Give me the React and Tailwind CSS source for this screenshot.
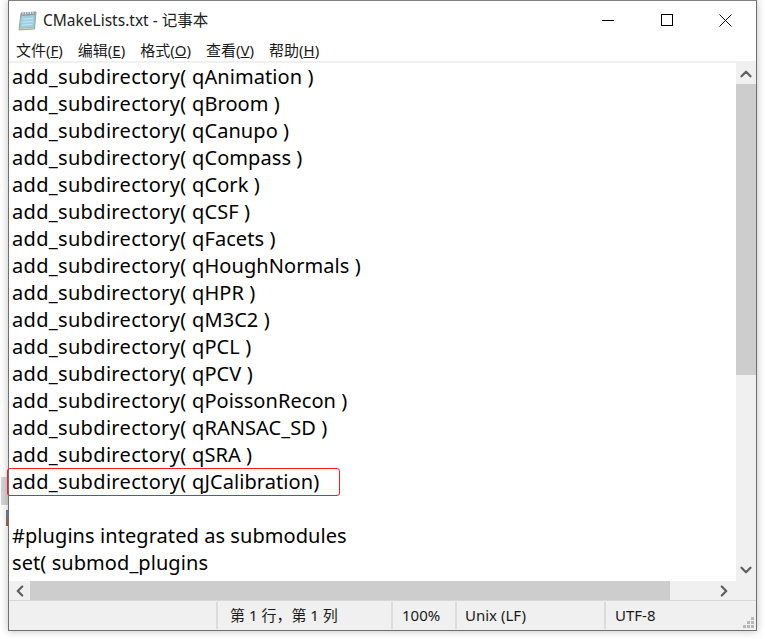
import { ChevronUp, ChevronDown, ChevronLeft, ChevronRight } from 'lucide-react';

const MODULES = [
  'qAnimation )',
  'qBroom )',
  'qCanupo )',
  'qCompass )',
  'qCork )',
  'qCSF )',
  'qFacets )',
  'qHoughNormals )',
  'qHPR )',
  'qM3C2 )',
  'qPCL )',
  'qPCV )',
  'qPoissonRecon )',
  'qRANSAC_SD )',
  'qSRA )',
];

const MENUS = [
  ['文件(', 'F', ')'],
  ['编辑(', 'E', ')'],
  ['格式(', 'O', ')'],
  ['查看(', 'V', ')'],
  ['帮助(', 'H', ')'],
];

const FONT = "font-['Noto_Sans','Noto_Sans_CJK_SC',sans-serif]";

function NotepadIcon() {
  return (
    <svg width="19" height="21" viewBox="0 0 19 21">
      <path d="M3 3 L18 2 L16.5 19 L1 20 Z" fill="#e4dcc0" stroke="#a8a48c" strokeWidth="1" />
      <path d="M3.5 3 L17.5 2 L16 17.5 L1.8 18.3 Z" fill="#9ed0e4" stroke="#7fa9bb" strokeWidth="0.6" />
      <path d="M3.5 3 L17.5 2 L17.2 5 L3.2 6 Z" fill="#8d9ca5" />
      <path d="M5 1 V4.5 M7.5 1 V4.5 M10 1 V4 M12.5 1 V4 M15 1 V4" stroke="#e8edf0" strokeWidth="1" />
      <path d="M5 9 L15 8.3 M4.7 12 L14.7 11.3 M4.4 15 L14.4 14.3" stroke="#c8e6f1" strokeWidth="1" />
    </svg>
  );
}

function Prefix() {
  return <span className="tracking-[0.33px]">add_subdirectory( </span>;
}

export default function App() {
  return (
    <div className={`w-[765px] h-[639px] bg-white overflow-hidden relative ${FONT}`}>
      {/* bits of the desktop behind the window */}
      <div className="absolute left-[1px] top-[477px] w-[7px] h-[28px] bg-[#d4d4d4]" />
      <div className="absolute left-[6px] top-[510px] w-[2px] h-[16px] bg-gradient-to-b from-[#3f8fb0] to-[#b5562f]" />

      <div className="ml-[8px] w-[749px] h-[631px] flex flex-col bg-white border border-[#6f6f6f] border-t-[#808080] shadow-[0_0_8px_rgba(0,0,0,0.25)] relative">
        {/* title bar */}
        <div className="h-[39px] flex items-center shrink-0">
          <div className="ml-[9px]"><NotepadIcon /></div>
          <span className="ml-[6px] text-[15.5px] text-[#222]">CMakeLists.txt - 记事本</span>
          <div className="ml-auto flex items-center h-full -mt-[1px] pr-[1px]">
            <div className="w-[59px] flex justify-center"><div className="w-[12px] h-[1px] bg-black" /></div>
            <div className="w-[59px] flex justify-center"><div className="w-[12px] h-[12px] border border-black" /></div>
            <div className="w-[59px] flex justify-center">
              <svg width="13" height="13" viewBox="0 0 13 13"><path d="M0.5 0.5 L12.5 12.5 M12.5 0.5 L0.5 12.5" stroke="#111" strokeWidth="1" /></svg>
            </div>
          </div>
        </div>

        {/* menu */}
        <div className="h-[21px] flex items-center gap-[15px] pl-[7px] text-[15px] text-[#1a1a1a] shrink-0">
          {MENUS.map(([a, k, b]) => (
            <span key={k}>{a}<span className="underline">{k}</span>{b}</span>
          ))}
        </div>
        <div className="h-[2px] bg-[#f0f0f0] shrink-0" />

        {/* editor and vertical scrollbar */}
        <div className="flex flex-1 min-h-0">
          <div className="flex-1 pl-[3px] text-[20px] leading-[27px] tracking-[0.07px] text-black whitespace-pre">
            {MODULES.map((m) => <div key={m}><Prefix />{m}</div>)}
            <div className="relative">
              <Prefix />qJCalibration)
              <div className="absolute -left-[5px] top-0 w-[333px] h-[28px] rounded-[3px] border border-[#f02020]" />
            </div>
            <div className="h-[27px]" />
            <div>#plugins integrated as submodules</div>
            <div>set( submod_plugins</div>
          </div>
          <div className="w-[20px] bg-[#f0f0f0] flex flex-col items-center shrink-0">
            <div className="h-[21px] flex items-center justify-center"><ChevronUp size={18} strokeWidth={3} color="#606060" /></div>
            <div className="w-full h-[291px] bg-[#cdcdcd]" />
            <div className="mt-auto h-[21px] -translate-y-[1px] flex items-center justify-center"><ChevronDown size={18} strokeWidth={3} color="#606060" /></div>
          </div>
        </div>

        {/* horizontal scrollbar */}
        <div className="h-[19px] flex items-center bg-[#f0f0f0] shrink-0">
          <div className="w-[21px] flex justify-center"><ChevronLeft size={18} strokeWidth={3} color="#606060" /></div>
          <div className="w-[640px] h-full bg-[#cdcdcd]" />
          <div className="flex-1 flex justify-end pr-[23px]"><ChevronRight size={18} strokeWidth={3} color="#606060" /></div>
        </div>

        {/* status bar */}
        <div className="h-[30px] flex bg-[#f0f0f0] border-t border-[#d7d7d7] pt-[1px] pb-[1px] text-[15px] text-[#1a1a1a] relative shrink-0">
          <div className="w-[209px] border-r-2 border-[#dcdcdc]" />
          <div className="w-[175px] border-r-2 border-[#dcdcdc] pl-[12px] flex items-center whitespace-pre">第 1 行，第 1 列</div>
          <div className="w-[64px] border-r-2 border-[#dcdcdc] pl-[9px] flex items-center">100%</div>
          <div className="w-[149px] border-r-2 border-[#dcdcdc] pl-[8px] flex items-center">Unix (LF)</div>
          <div className="pl-[9px] flex items-center">UTF-8</div>
          <svg className="absolute right-[1px] bottom-[1px]" width="12" height="12" viewBox="0 0 12 12" fill="#b8b8b8">
            <rect x="8" y="0" width="3" height="3" />
            <rect x="4" y="4" width="3" height="3" /><rect x="8" y="4" width="3" height="3" />
            <rect x="0" y="8" width="3" height="3" /><rect x="4" y="8" width="3" height="3" /><rect x="8" y="8" width="3" height="3" />
          </svg>
        </div>
      </div>
    </div>
  );
}
